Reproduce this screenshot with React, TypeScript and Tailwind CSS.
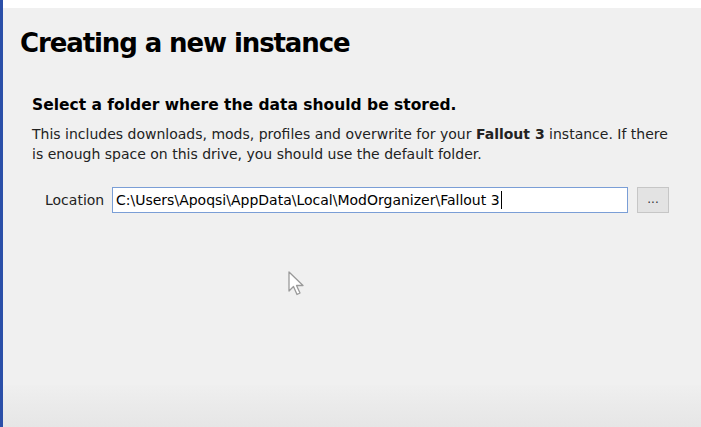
export default function App() {
  return (
    <div className="relative flex h-[427px] w-[701px] overflow-hidden bg-[#f0f0f0] font-['DejaVu_Sans',sans-serif] text-black">
      {/* left window edge */}
      <div className="w-[3px] bg-[#2b4fa8]" />
      <div className="flex flex-1 flex-col">
        {/* top strip */}
        <div className="h-[8px] w-full bg-white" />
        <div className="flex-1 pl-[17px] pt-[18px]">
          <h1 className="text-[26px] font-bold leading-[34px] tracking-[-1.1px]">Creating a new instance</h1>
          <div className="pl-[12px] pt-[35px]">
            <h2 className="text-[15.5px] font-bold leading-[20px]">Select a folder where the data should be stored.</h2>
            <p className="pt-[9px] text-[14px] leading-[20px] text-[#222]">
              This includes downloads, mods, profiles and overwrite for your <b>Fallout 3</b> instance. If there
              <br />
              is enough space on this drive, you should use the default folder.
            </p>
            <div className="flex items-center pl-[13px] pt-[23px]">
              <span className="w-[67px] text-[14px] text-[#222]">Location</span>
              <div className="flex h-[26px] w-[516px] items-center border border-[#7a9ed6] bg-white px-[3px] text-[14px]">
                C:\Users\Apoqsi\AppData\Local\ModOrganizer\Fallout 3
                <span className="ml-px h-[18px] w-px bg-black" />
              </div>
              <button className="ml-[9px] flex h-[26px] w-[32px] items-center justify-center border border-[#c6c6c6] bg-[#e3e3e3] pb-[2px] text-[12px] leading-none text-[#333]">
                ...
              </button>
            </div>
          </div>
        </div>
        <div className="h-[42px] bg-gradient-to-b from-[#efefef] to-[#e6e6e6]" />
      </div>
      {/* mouse pointer */}
      <svg className="absolute left-[288px] top-[271px]" width="20" height="28" viewBox="0 0 20 28">
        <path d="M1 1 L1 20 L5.5 15.5 L9 23.5 L12 22 L8.5 14.5 L15 14.5 Z" fill="#fff" stroke="#9a9a9a" strokeWidth="1.3" strokeLinejoin="round" />
      </svg>
    </div>
  )
}
